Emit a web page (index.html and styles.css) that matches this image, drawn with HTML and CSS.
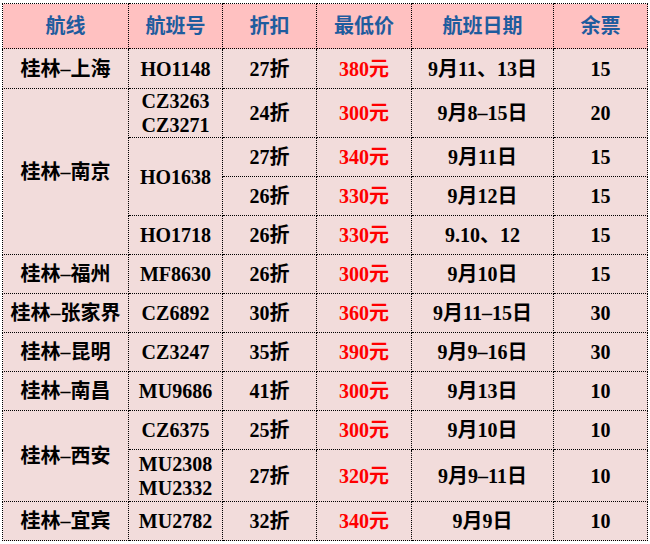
FILE: index.html
```html
<!DOCTYPE html>
<html lang="zh">
<head>
<meta charset="utf-8">
<link rel="stylesheet" href="styles.css">
</head>
<body>
<div class="wrap">
<table class="flights">
<colgroup>
<col class="c1"><col class="c2"><col class="c3"><col class="c4"><col class="c5"><col class="c6">
</colgroup>
<thead>
<tr class="head"><th>航线</th><th>航班号</th><th>折扣</th><th>最低价</th><th>航班日期</th><th>余票</th></tr>
</thead>
<tbody>
<tr class="r40"><td>桂林–上海</td><td>HO1148</td><td>27折</td><td class="price">380元</td><td>9月11、13日</td><td>15</td></tr>
<tr class="r49"><td rowspan="4">桂林–南京</td><td class="two">CZ3263<br>CZ3271</td><td>24折</td><td class="price">300元</td><td>9月8–15日</td><td>20</td></tr>
<tr class="r39"><td rowspan="2">HO1638</td><td>27折</td><td class="price">340元</td><td>9月11日</td><td>15</td></tr>
<tr class="r39"><td>26折</td><td class="price">330元</td><td>9月12日</td><td>15</td></tr>
<tr class="r39"><td>HO1718</td><td>26折</td><td class="price">330元</td><td>9.10、12</td><td>15</td></tr>
<tr class="r39"><td>桂林–福州</td><td>MF8630</td><td>26折</td><td class="price">300元</td><td>9月10日</td><td>15</td></tr>
<tr class="r39"><td>桂林–张家界</td><td>CZ6892</td><td>30折</td><td class="price">360元</td><td>9月11–15日</td><td>30</td></tr>
<tr class="r39"><td>桂林–昆明</td><td>CZ3247</td><td>35折</td><td class="price">390元</td><td>9月9–16日</td><td>30</td></tr>
<tr class="r39"><td>桂林–南昌</td><td>MU9686</td><td>41折</td><td class="price">300元</td><td>9月13日</td><td>10</td></tr>
<tr class="r39"><td rowspan="2">桂林–西安</td><td>CZ6375</td><td>25折</td><td class="price">300元</td><td>9月10日</td><td>10</td></tr>
<tr class="r52"><td class="two">MU2308<br>MU2332</td><td>27折</td><td class="price">320元</td><td>9月9–11日</td><td>10</td></tr>
<tr class="r39"><td>桂林–宜宾</td><td>MU2782</td><td>32折</td><td class="price">340元</td><td>9月9日</td><td>10</td></tr>
</tbody>
</table>
</div>
</body>
</html>
```

FILE: styles.css
```css
html, body {
  margin: 0;
  padding: 0;
  background: #ffffff;
}
.wrap {
  padding: 3px 0 0 2px;
}
.flights {
  border-collapse: collapse;
  table-layout: fixed;
  width: 645px;
  font-family: "Liberation Serif", "Noto Sans CJK SC", serif;
  font-weight: bold;
  font-size: 20px;
  color: #000000;
}
.c1 { width: 126px; }
.c2 { width: 94px; }
.c3 { width: 94px; }
.c4 { width: 95px; }
.c5 { width: 142px; }
.c6 { width: 94px; }
.flights th, .flights td {
  border: 1px dotted #000000;
  padding: 0;
  text-align: center;
  vertical-align: middle;
  line-height: 22px;
}
.flights th {
  background: #ffc1c1;
  color: #1f5c9e;
  font-size: 20px;
}
.flights td {
  background: #f2dcdb;
}
.flights td.two {
  line-height: 24px;
}
.flights td.price {
  color: #ff0000;
}
.head { height: 45px; }
.r40 { height: 40px; }
.r49 { height: 49px; }
.r39 { height: 39px; }
.r52 { height: 52px; }
```
